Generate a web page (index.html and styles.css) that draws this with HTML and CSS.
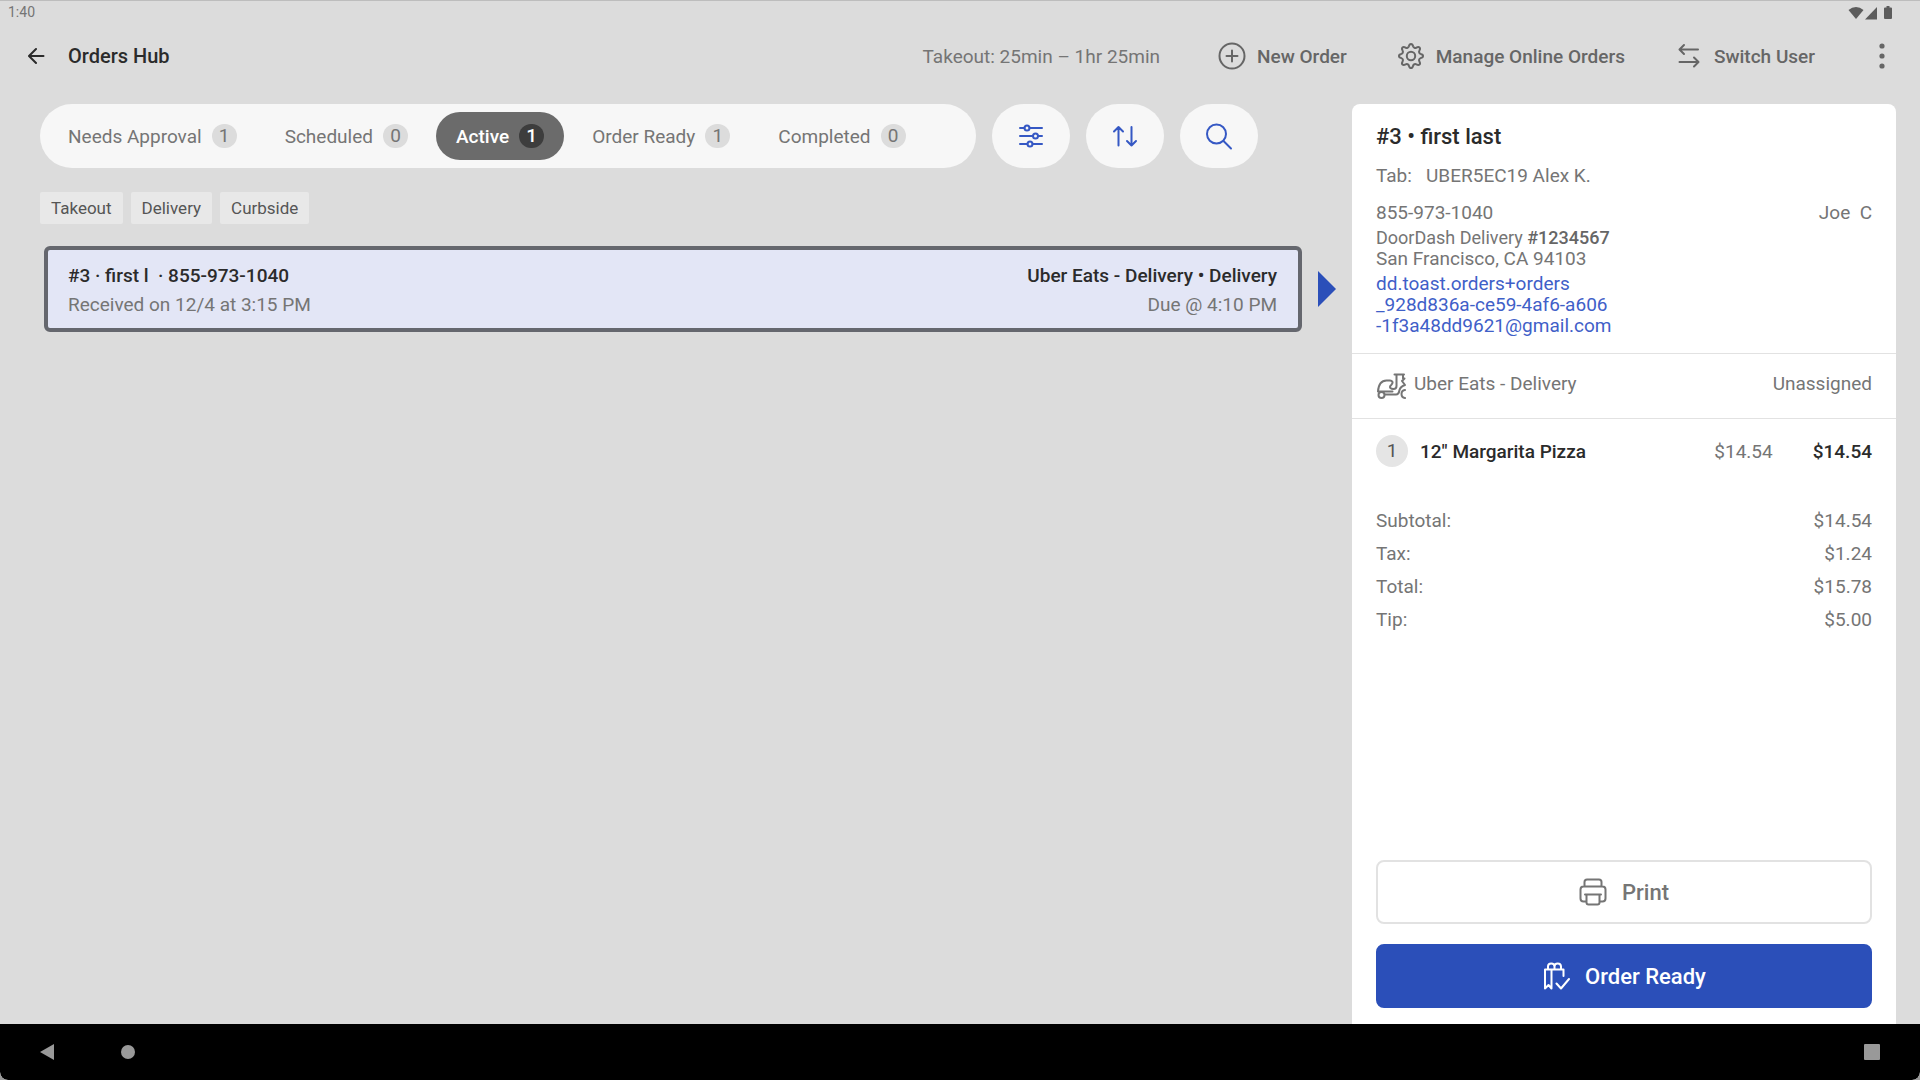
FILE: index.html
```html
<!DOCTYPE html>
<html lang="en">
	<head>
		<meta charset="UTF-8" />
		<meta name="viewport" content="width=device-width, initial-scale=1.0" />
		<title>Orders Hub</title>
		<link rel="stylesheet" href="styles.css">
	</head>
	<body>
		<div class="status-bar">
			<span>1:40</span>
			<div class="status-icons">
				<svg width="16" height="14" viewBox="0 0 16 14"><path d="M8 13 0.500 4Q4 1 8 1t7.500 3z" /></svg>
				<svg width="12" height="14" viewBox="0 0 12 14"><path d="M12 1v12.500H0z" /></svg>
				<svg class="battery" width="8" height="14" viewBox="0 0 8 14"><path d="M2.500 0h3v1.500H7q1 0 1 1V12q0 1-1 1H1q-1 0-1-1V2.500q0-1 1-1h1.500z" /></svg>
			</div>
		</div>

		<header class="header">
			<button type="button" class="back" aria-label="Back">
				<svg width="18" height="18" viewBox="0 0 18 18"><path d="M15.500 9H1.500M8 2 1 9l7 7" /></svg>
			</button>
			<h1>Orders Hub</h1>
			<nav class="actions">
				<span class="quote-time">Takeout: 25min – 1hr 25min</span>
				<button type="button" class="action">
					<svg width="28" height="28" viewBox="0 0 28 28"><circle cx="14" cy="14" r="12.500" /><path d="M14 8.500v11M8.500 14h11" /></svg>
					New Order
				</button>
				<button type="button" class="action">
					<svg width="28" height="28" viewBox="0 0 28 28"><path d="M11.900 4.300 C12.600 1.200 15.400 1.200 16.100 4.300 A2.200 2.200 0 0 0 19.400 5.600 C22.100 4 24 5.900 22.400 8.600 A2.200 2.200 0 0 0 23.700 11.900 C26.800 12.600 26.800 15.400 23.700 16.100 A2.200 2.200 0 0 0 22.400 19.400 C24 22.100 22.100 24 19.400 22.400 A2.200 2.200 0 0 0 16.100 23.700 C15.400 26.800 12.600 26.800 11.900 23.700 A2.200 2.200 0 0 0 8.600 22.400 C5.900 24 4 22.100 5.600 19.400 A2.200 2.200 0 0 0 4.300 16.100 C1.200 15.400 1.200 12.600 4.300 11.900 A2.200 2.200 0 0 0 5.600 8.600 C4 5.900 5.900 4 8.600 5.600 A2.200 2.200 0 0 0 11.900 4.300z" /><circle cx="14" cy="14" r="4.200" /></svg>
					Manage Online Orders
				</button>
				<button type="button" class="action">
					<svg width="28" height="28" viewBox="0 0 28 28"><path d="M23 7.500H5M9 3 4.500 7.500 9 12M4.500 20H23M19 15.500l4.500 4.500-4.500 4.500" /></svg>
					Switch User
				</button>
				<button type="button" class="more" aria-label="More options">
					<svg width="6" height="26" viewBox="0 0 6 26"><circle cx="3" cy="3" r="2.600" /><circle cx="3" cy="13" r="2.600" /><circle cx="3" cy="23" r="2.600" /></svg>
				</button>
			</nav>
		</header>

		<main class="content">
			<section class="orders">
				<div class="toolbar">
					<div class="tabs">
						<button type="button" class="tab">Needs Approval <span class="count">1</span></button>
						<button type="button" class="tab">Scheduled <span class="count">0</span></button>
						<button type="button" class="tab active">Active <span class="count">1</span></button>
						<button type="button" class="tab">Order Ready <span class="count">1</span></button>
						<button type="button" class="tab">Completed <span class="count">0</span></button>
					</div>
					<button type="button" class="tool" aria-label="Filter">
						<svg width="26" height="26" viewBox="0 0 26 26"><path d="M2 5h4.500M11.500 5H24M2 13h13M20 13h4M2 21h7.500M14.500 21H24" /><circle cx="9" cy="5" r="2.500" /><circle cx="17.500" cy="13" r="2.500" /><circle cx="12" cy="21" r="2.500" /></svg>
					</button>
					<button type="button" class="tool" aria-label="Sort">
						<svg width="26" height="26" viewBox="0 0 26 26"><path d="M6.500 22.500V4M2 8.500 6.500 4 11 8.500M19.500 4v18.500M15 18l4.500 4.500L24 18" /></svg>
					</button>
					<button type="button" class="tool" aria-label="Search">
						<svg width="28" height="28" viewBox="0 0 28 28"><circle cx="11.500" cy="12" r="9.500" /><path d="m18.500 19 7.500 7.500" /></svg>
					</button>
				</div>

				<div class="filters">
					<button type="button" class="chip">Takeout</button>
					<button type="button" class="chip">Delivery</button>
					<button type="button" class="chip">Curbside</button>
				</div>

				<div class="order-row">
					<article class="order">
						<div class="line main-line">
							<span>#3 · first l &nbsp;· 855-973-1040</span>
							<span>Uber Eats - Delivery • Delivery</span>
						</div>
						<div class="line">
							<span>Received on 12/4 at 3:15 PM</span>
							<span>Due @ 4:10 PM</span>
						</div>
					</article>
					<svg class="pointer" width="18" height="36" viewBox="0 0 18 36"><path d="M0 0 18 18 0 36z" /></svg>
				</div>
			</section>

			<aside class="details">
				<div class="customer">
					<h2>#3 • first last</h2>
					<p class="tab-name">Tab: &nbsp; UBER5EC19 Alex K.</p>
					<div class="line">
						<span>855-973-1040</span>
						<span>Joe &nbsp;C</span>
					</div>
					<p class="address"><span class="courier">DoorDash Delivery <b>#1234567</b></span><br>San Francisco, CA 94103</p>
					<a class="email" href="mailto:dd.toast.orders+orders_928d836a-ce59-4af6-a606-1f3a48dd9621@gmail.com">dd.toast.orders+orders<br>_928d836a-ce59-4af6-a606<br>-1f3a48dd9621@gmail.com</a>
				</div>

				<div class="line dining">
					<svg width="30" height="28" viewBox="0 0 30 28"><path d="M18.500 1.500H28M20.500 1.500V13q0 3-3 3-3.500-.300-3.500-2 0-1 1.200-2 1.800-1.700 1.200-3.200-.700-1.300-2.400-1.300h-3.500C5.500 7.500 2.500 11.500 2 18.500h14.500M27 1.500V5.500h1.500L26 8l3 4q-4.500 1.500-5.500 5-.700 4.500-3.500 4.500H9" /><circle cx="5.500" cy="22" r="3" /><path d="M29 17q-3.500.500-3.500 4t3.500 4" /></svg>
					<span>Uber Eats - Delivery</span>
					<span>Unassigned</span>
				</div>

				<div class="item">
					<span class="qty">1</span>
					<span class="name">12" Margarita Pizza</span>
					<span>$14.54</span>
					<span class="price">$14.54</span>
				</div>

				<table class="totals">
					<tr><th scope="row">Subtotal:</th><td>$14.54</td></tr>
					<tr><th scope="row">Tax:</th><td>$1.24</td></tr>
					<tr><th scope="row">Total:</th><td>$15.78</td></tr>
					<tr><th scope="row">Tip:</th><td>$5.00</td></tr>
				</table>

				<div class="buttons">
					<button type="button" class="btn">
						<svg width="28" height="28" viewBox="0 0 28 28"><path d="M5.500 8.500V4q0-2.500 2.500-2.500h12q2.500 0 2.500 2.500v4.500M7.500 23.500H4.500q-3 0-3-3v-9q0-3 3-3h19q3 0 3 3v9q0 3-3 3h-3M6 16.500h16M7.500 16.500v8q0 2 2 2h9q2 0 2-2v-8" /></svg>
						Print
					</button>
					<button type="button" class="btn primary">
						<svg width="28" height="28" viewBox="0 0 28 28"><path d="M3 7.500h18.500V14M3 7.500v19M9.500 7.500v19L6.500 23 3 26.500M6 7.500V4.500q0-3 3.200-3t3.300 3v3M12.500 7.500V4.500q0-3 3.200-3t3.300 3v3M14.500 21.500l4.500 5 8-9.500" /></svg>
						Order Ready
					</button>
				</div>
			</aside>
		</main>

		<footer class="nav-bar">
			<button type="button" aria-label="Back"><svg width="16" height="18" viewBox="0 0 16 18"><path d="M14 1v16L0 9z" /></svg></button>
			<button type="button" aria-label="Home"><svg width="16" height="16" viewBox="0 0 16 16"><circle cx="8" cy="8" r="7" /></svg></button>
			<button type="button" class="recent" aria-label="Recent apps"><svg width="16" height="16" viewBox="0 0 16 16"><rect width="16" height="16" rx="1" /></svg></button>
		</footer>
	</body>
</html>
```
FILE: styles.css
```css
* {
	box-sizing: border-box;
}

html {
	background: #999;
}

body {
	margin: 0;
	min-height: 100vh;
	display: flex;
	flex-direction: column;
	border-radius: 0 0 8px 8px;
	background: #dcdcdc;
	color: #757575;
	font-family: Roboto, 'Liberation Sans', sans-serif;
	font-size: 19px;
	line-height: 21px;
}

h1,
h2,
p {
	margin: 0;
	font-weight: 500;
	color: #2b2b2b;
}

button {
	padding: 0;
	border: none;
	background: none;
	color: inherit;
	font: inherit;
	cursor: pointer;
}

svg {
	display: block;
	flex: none;
	fill: none;
	stroke: currentColor;
	stroke-width: 2;
	stroke-linecap: round;
	stroke-linejoin: round;
}

.line {
	display: flex;
	justify-content: space-between;
}

/* status bar */
.status-bar {
	display: flex;
	justify-content: space-between;
	align-items: center;
	height: 24px;
	padding: 0 28px 0 8px;
	border-top: 1px solid #bdbdbd;
	font-size: 14px;
}

.status-icons {
	display: flex;
	gap: 1px;
	color: #5c5c5c;
}

.battery {
	margin-left: 6px;
}

.status-icons svg,
.more svg,
.pointer,
.nav-bar svg {
	fill: currentColor;
	stroke: none;
}

/* header */
.header {
	display: flex;
	align-items: center;
	height: 64px;
	padding: 0 32px 0 28px;
}

.header h1 {
	margin-left: 22px;
	font-size: 20px;
	line-height: 24px;
}

.back {
	color: #2b2b2b;
}

.actions {
	display: flex;
	align-items: center;
	gap: 50px;
	margin-left: auto;
}

.quote-time {
	margin-right: 8px;
}

.action {
	display: flex;
	align-items: center;
	gap: 11px;
	color: #666;
	font-weight: 500;
}

.more {
	padding: 0 3px;
	margin-left: 11px;
	color: #666;
}

/* order list */
.content {
	flex: 1;
	display: flex;
	padding: 16px 24px 0 40px;
}

.orders {
	flex: 1;
}

.toolbar {
	display: flex;
	gap: 16px;
	padding-right: 94px;
}

.tabs {
	flex: 1;
	display: flex;
	gap: 8px;
	padding: 8px;
	border-radius: 32px;
	background: #f7f7f7;
}

.tab {
	display: flex;
	align-items: center;
	gap: 10px;
	height: 48px;
	padding: 0 20px;
	border-radius: 24px;
}

.count {
	width: 25px;
	border-radius: 12px;
	background: #dcdcdc;
	line-height: 24px;
	text-align: center;
}

.tab.active {
	background: #6b6b6b;
	color: #fff;
	font-weight: 500;
}

.active .count {
	background: #3d3d3d;
}

.tool {
	display: flex;
	align-items: center;
	justify-content: center;
	width: 78px;
	height: 64px;
	border-radius: 32px;
	background: #f7f7f7;
	color: #3558c4;
}

.filters {
	display: flex;
	gap: 8px;
	margin-top: 24px;
}

.chip {
	height: 32px;
	padding: 0 11px;
	border-radius: 2px;
	background: #e8e8e8;
	color: #555;
	font-size: 17px;
}

.order-row {
	display: flex;
	align-items: center;
	gap: 16px;
	margin: 22px 16px 0 4px;
}

.order {
	flex: 1;
	display: flex;
	flex-direction: column;
	gap: 8px;
	padding: 15px 21px 13px 20px;
	border: 4px solid #65676e;
	border-radius: 6px;
	background: #e3e6f6;
}

.main-line {
	color: #2b2b2b;
	font-weight: 500;
}

.pointer {
	color: #2b4fb9;
}

/* order details */
.details {
	flex: 0 0 544px;
	display: flex;
	flex-direction: column;
	border-radius: 8px 8px 0 0;
	background: #fff;
}

.customer {
	padding: 21px 24px 17px;
}

.customer h2 {
	font-size: 22px;
	line-height: 24px;
}

.customer p {
	color: inherit;
	font-weight: 400;
}

.customer .tab-name {
	margin: 16px 0;
}

.customer .address {
	margin: 4px 0;
}

.courier {
	font-size: 18px;
}

.courier b {
	color: #666;
	font-weight: 500;
}

.email {
	color: #3f60c8;
	text-decoration: none;
}

.dining {
	gap: 8px;
	height: 66px;
	padding: 19px 24px;
	border: solid #e2e2e2;
	border-width: 1px 0;
}

.dining span:last-child {
	margin-left: auto;
}

.item {
	display: flex;
	align-items: center;
	padding: 16px 24px 37px;
}

.qty {
	width: 32px;
	border-radius: 16px;
	background: #e5e5e5;
	color: #555;
	line-height: 32px;
	text-align: center;
}

.name {
	flex: 1;
	margin-left: 12px;
	color: #2b2b2b;
	font-weight: 500;
}

.price {
	margin-left: 40px;
	color: #2b2b2b;
	font-weight: 500;
}

.totals {
	margin: 0 24px;
	border-collapse: collapse;
}

.totals th,
.totals td {
	padding: 6px 0;
	font-weight: 400;
	text-align: left;
}

.totals td {
	text-align: right;
}

.buttons {
	display: flex;
	flex-direction: column;
	gap: 20px;
	margin-top: auto;
	padding: 0 24px 16px;
}

.btn {
	display: flex;
	align-items: center;
	justify-content: center;
	gap: 15px;
	height: 64px;
	border: 2px solid #e2e2e2;
	border-radius: 8px;
	font-size: 22px;
	font-weight: 500;
}

.btn.primary {
	border-color: #2b4fb9;
	background: #2b4fb9;
	color: #fff;
}

/* navigation bar */
.nav-bar {
	display: flex;
	align-items: center;
	gap: 64px;
	height: 56px;
	padding: 0 40px;
	border-radius: 0 0 8px 8px;
	background: #000;
	color: #999;
}

.recent {
	margin-left: auto;
}
```
